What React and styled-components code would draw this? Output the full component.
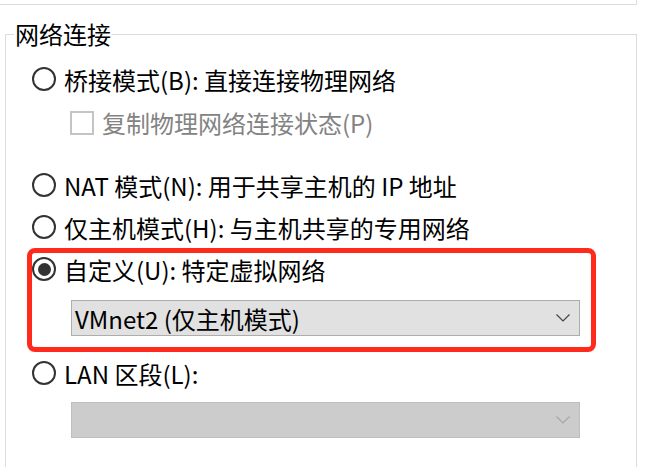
import styled, { createGlobalStyle } from "styled-components";

const GlobalStyle = createGlobalStyle`
  html, body {
    margin: 0;
    padding: 0;
    background: #ffffff;
    overflow: hidden;
  }
  body {
    font-family: "Noto Sans CJK SC", "Noto Sans", sans-serif;
    color: #000000;
  }
`;

const Page = styled.div`
  width: 650px;
  height: 467px;
  overflow: hidden;
`;

const UpperBox = styled.div`
  width: 636px;
  height: 4px;
  border-right: 1px solid #dcdcdc;
  border-bottom: 1px solid #dcdcdc;
`;

const Group = styled.fieldset`
  margin: 17px 0 0 5px;
  padding: 12px 0 0 26px;
  width: 604px;
  height: 460px;
  border: 1px solid #dcdcdc;
  border-bottom: none;
  min-width: 0;
`;

const Legend = styled.legend`
  margin-left: -18px;
  padding: 0 1px;
  font-size: 24px;
  line-height: 24px;
`;

const Row = styled.div`
  display: flex;
  align-items: center;
  gap: 8px;
  height: ${(p) => p.$h || 42}px;
  margin-top: ${(p) => p.$mt || 0}px;
  padding-left: ${(p) => p.$indent || 0}px;
  font-size: 24px;
  white-space: nowrap;
  color: ${(p) => (p.$disabled ? "#838383" : "#000000")};
`;

const Radio = styled.span`
  flex: none;
  width: 24px;
  height: 24px;
  box-sizing: border-box;
  border: 2.5px solid #333333;
  border-radius: 50%;
  display: flex;
  align-items: center;
  justify-content: center;

  &::after {
    content: "";
    width: 13px;
    height: 13px;
    border-radius: 50%;
    background: #333333;
    display: ${(p) => (p.$checked ? "block" : "none")};
  }
`;

const Check = styled.span`
  flex: none;
  width: 24px;
  height: 24px;
  box-sizing: border-box;
  border: 2px solid #c4c4c4;
  background: #ffffff;
`;

const Highlight = styled.div`
  position: relative;
  width: 569px;
  margin-left: -5px;
  padding: 0 0 16px 5px;
  box-sizing: border-box;

  &::after {
    content: "";
    position: absolute;
    inset: 0;
    border: 5px solid #ff2a1c;
    border-radius: 8px;
    pointer-events: none;
  }
`;

const Select = styled.div`
  display: flex;
  align-items: center;
  justify-content: space-between;
  box-sizing: border-box;
  width: 509px;
  height: 36px;
  margin: ${(p) => p.$mt}px 0 0 39px;
  padding: 0 9px 0 3px;
  font-size: 24px;
  white-space: nowrap;
  background: ${(p) => (p.$disabled ? "#cccccc" : "#e1e1e1")};
  border: 1px solid ${(p) => (p.$disabled ? "#bfbfbf" : "#adadad")};
`;

const Chevron = ({ color }) => (
  <svg width="14" height="8" viewBox="0 0 14 8">
    <path d="M0.5 0.5 L7 7 L13.5 0.5" fill="none" stroke={color} strokeWidth="1.2" />
  </svg>
);

export default function App() {
  return (
    <Page>
      <GlobalStyle />
      <UpperBox />
      <Group>
        <Legend>网络连接</Legend>
        <Row>
          <Radio />
          桥接模式(B): 直接连接物理网络
        </Row>
        <Row $h={45} $indent={38} $disabled>
          <Check />
          复制物理网络连接状态(P)
        </Row>
        <Row $mt={19}>
          <Radio />
          NAT 模式(N): 用于共享主机的 IP 地址
        </Row>
        <Row>
          <Radio />
          仅主机模式(H): 与主机共享的专用网络
        </Row>
        <Highlight>
          <Row>
            <Radio $checked />
            自定义(U): 特定虚拟网络
          </Row>
          <Select $mt={10}>
            <span>VMnet2 (仅主机模式)</span>
            <Chevron color="#444444" />
          </Select>
        </Highlight>
        <Row>
          <Radio />
          LAN 区段(L):
        </Row>
        <Select $mt={8} $disabled>
          <span />
          <Chevron color="#a6a6a6" />
        </Select>
      </Group>
    </Page>
  );
}
